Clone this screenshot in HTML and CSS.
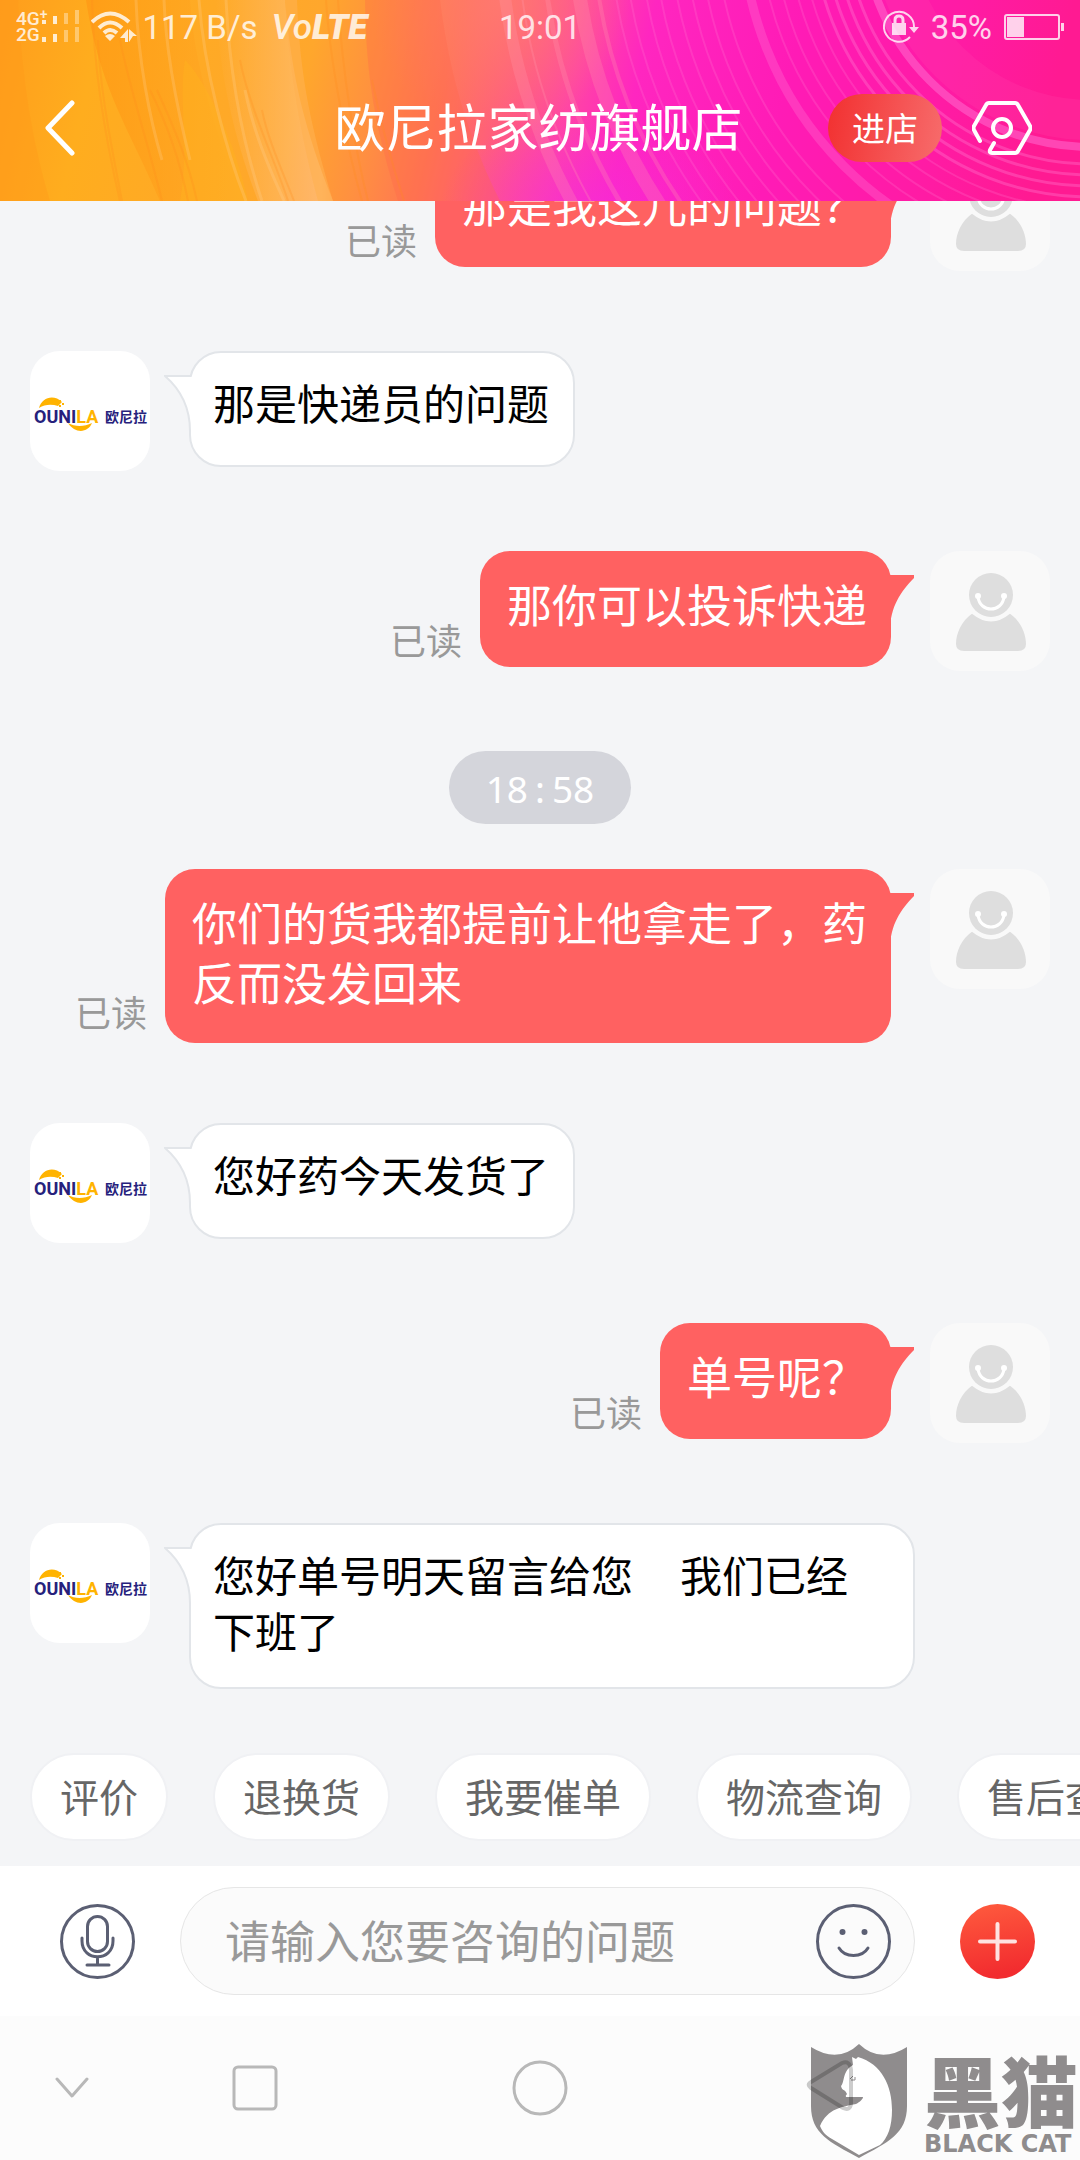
FILE: index.html
```html
<!DOCTYPE html>
<html lang="zh-CN">
<head>
<meta charset="utf-8">
<meta name="viewport" content="width=device-width, initial-scale=1">
<title>欧尼拉家纺旗舰店</title>
<link rel="stylesheet" href="styles.css">
</head>
<body>
<svg class="sprite" aria-hidden="true">
  <symbol id="user" viewBox="0 0 120 120">
    <circle cx="61" cy="44" r="22" fill="#dedede"/>
    <path d="M43 62Q61 78 79 62C91 70 96 83 96 93Q96 100 88 100H34Q26 100 26 93C26 83 31 70 43 62Z" fill="#dedede"/>
    <path d="M43 61Q61 76 79 61" fill="none" stroke="#f9f9f9" stroke-width="4"/>
    <path d="M48 46C50 62 72 62 74 46" fill="none" stroke="#fff" stroke-width="3"/>
    <circle cx="48" cy="45" r="3" fill="#fff"/><circle cx="74" cy="45" r="3" fill="#fff"/>
  </symbol>
  <symbol id="swoosh" viewBox="0 0 120 120">
    <path d="M9 57C12 46 24 43 32 51L28 55C22 53 15 53 9 57Z" fill="#ffb300"/>
    <path d="M28 49h3v3h-3zM32 52h2v2h-2zM29 54h2v2h-2z" fill="#ffb300"/>
    <path d="M38 72C45 76 54 76 62 72C58 82 45 83 38 72Z" fill="#ffb300"/>
  </symbol>
  <symbol id="tail-in" viewBox="0 0 32 56">
    <path d="M32 2H2C16 14 26 32 26 56H32Z" fill="#fff"/>
    <path d="M27 1H1C16 14 26 32 26 56" fill="none" stroke="#e2e5e9" stroke-width="2"/>
  </symbol>
  <symbol id="tail-out" viewBox="0 0 32 56">
    <path d="M0 0H31V3C18 16 7 32 7 56H0Z" fill="#ff6161"/>
  </symbol>
</svg>

<div class="app">
  <header class="header">
    <svg class="header-art" viewBox="0 0 1080 201" preserveAspectRatio="none" aria-hidden="true">
      <defs>
        <linearGradient id="base" gradientUnits="userSpaceOnUse" x1="0" y1="0" x2="1020" y2="240">
          <stop offset="0" stop-color="#ff9d1c"/><stop offset=".1" stop-color="#ffad1e"/>
          <stop offset=".3" stop-color="#ffa72c"/><stop offset=".37" stop-color="#ff9040"/>
          <stop offset=".43" stop-color="#ff7654"/><stop offset=".49" stop-color="#ff5d7e"/>
          <stop offset=".55" stop-color="#ff46a4"/><stop offset=".61" stop-color="#ff26c0"/>
          <stop offset=".75" stop-color="#ff1bb6"/><stop offset=".9" stop-color="#ff1ba4"/>
          <stop offset="1" stop-color="#ff1a92"/>
        </linearGradient>
        <linearGradient id="light" x1="0" x2="1" y1="0" y2="0">
          <stop offset="0" stop-color="#ffc080" stop-opacity="0"/><stop offset=".9" stop-color="#ffc480" stop-opacity=".7"/>
          <stop offset="1" stop-color="#ffc080" stop-opacity=".45"/>
        </linearGradient>
        <linearGradient id="deep" x1="0" x2="1" y1="0" y2="0">
          <stop offset="0" stop-color="#ff9614" stop-opacity=".65"/><stop offset="1" stop-color="#ff9614" stop-opacity="0"/>
        </linearGradient>
        <radialGradient id="violet"><stop offset="0" stop-color="#f52bdc" stop-opacity=".7"/><stop offset="1" stop-color="#f52bdc" stop-opacity="0"/></radialGradient>
        <radialGradient id="coral"><stop offset="0" stop-color="#ff7c70" stop-opacity=".8"/><stop offset="1" stop-color="#ff7c70" stop-opacity="0"/></radialGradient>
      </defs>
      <rect width="1080" height="201" fill="url(#base)"/>
      <ellipse cx="590" cy="210" rx="150" ry="100" fill="url(#violet)"/>
      <ellipse cx="500" cy="0" rx="130" ry="130" fill="url(#coral)"/>
      <path d="M0 0H18C22 80 32 140 50 201H0Z" fill="#ff981a" opacity=".35"/>
      <path d="M86 0H190C195 80 225 150 240 201H160C130 130 100 90 86 0Z" fill="url(#deep)"/>
      <path d="M185 60C205 80 235 140 248 201H180C190 150 178 100 185 60Z" fill="#ffb41e" opacity=".4"/>
      <path d="M215 0H285C292 80 305 130 333 201H258C235 140 220 80 215 0Z" fill="url(#light)"/>
      <path d="M285 0H297C300 80 312 130 333 201H318C302 140 290 80 285 0Z" fill="#ffb050" opacity=".6"/>
      <path d="M365 0H440C450 80 470 140 500 201H398C376 130 366 80 365 0Z" fill="#ff6848" opacity=".3"/>
      <g fill="none" stroke="#ff8a1c" stroke-opacity=".25" stroke-width="2">
        <path d="M92 0C94 80 108 150 120 201M98 40C100 90 112 150 122 201M120 40C130 90 150 150 162 201M150 90C165 120 180 160 188 201M157 90C175 130 188 160 197 201M240 60C250 110 275 160 288 201M262 110C268 140 282 170 294 201M326 0C330 60 345 140 362 201M338 0C342 70 355 150 368 201M372 80C382 130 394 170 404 201"/>
      </g>
      <g fill="none" stroke="#ffd296" stroke-opacity=".25" stroke-width="3">
        <path d="M136 0C138 60 150 120 162 160M164 0C166 60 180 120 190 160M199 0C204 70 226 150 246 201M226 0C230 80 245 150 262 201M245 90C255 140 275 180 284 201"/>
      </g>
      <g fill="none" stroke="#ff9ab0" stroke-opacity=".25">
        <circle cx="1090" cy="-80" r="590" stroke-width="12"/><circle cx="1090" cy="-80" r="573" stroke-width="2"/>
        <circle cx="1090" cy="-80" r="548" stroke-width="5"/><circle cx="1090" cy="-80" r="516" stroke-width="14"/>
        <circle cx="1090" cy="-80" r="497" stroke-width="4"/>
      </g>
      <g fill="none" stroke="#ff7ad0" stroke-opacity=".24" stroke-width="2">
        <circle cx="1090" cy="-80" r="480"/><circle cx="1090" cy="-80" r="466"/><circle cx="1090" cy="-80" r="450"/>
        <circle cx="1090" cy="-80" r="436"/><circle cx="1090" cy="-80" r="420"/><circle cx="1090" cy="-80" r="405"/>
        <circle cx="1090" cy="-80" r="390"/><circle cx="1090" cy="-80" r="374"/><circle cx="1090" cy="-80" r="330"/>
        <circle cx="1090" cy="-80" r="316"/><circle cx="1090" cy="-80" r="302"/><circle cx="1090" cy="-80" r="289"/>
      </g>
      <g fill="none" stroke="#ff7ad0" stroke-opacity=".36" stroke-width="3">
        <circle cx="1090" cy="-80" r="277"/><circle cx="1090" cy="-80" r="266"/><circle cx="1090" cy="-80" r="255"/>
        <circle cx="1090" cy="-80" r="244"/>
      </g>
      <g fill="none" stroke="#ff64cc">
        <circle cx="1090" cy="-80" r="348" stroke-width="9" stroke-opacity=".4"/><circle cx="1090" cy="-80" r="227" stroke-width="8" stroke-opacity=".6"/>
      </g>
      <circle cx="1090" cy="-80" r="200" fill="none" stroke="#ff50b0" stroke-opacity=".18" stroke-width="40"/>
    </svg>

    <div class="status">
      <div class="status-side">
        <div class="cell" aria-label="信号">
          <span class="sim">4G<sup>+</sup></span>
          <span class="sim">2G</span>
        </div>
        <svg class="bars" width="38" height="34" viewBox="0 0 38 34" fill="#fff" aria-hidden="true">
          <path d="M0 10h4v4H0zM11 6h4v8h-4zM0 27h4v5H0zM11 24h4v8h-4z"/>
          <path d="M22 3h4v11h-4zM33 0h4v14h-4zM22 20h4v12h-4zM33 17h4v15h-4z" opacity=".45"/>
        </svg>
        <svg class="wifi" width="46" height="32" viewBox="0 0 46 32" aria-hidden="true">
          <g fill="none" stroke="#fff" stroke-width="4"><path d="M1 11Q19-6 38 11M8 17Q19 6 31 17"/><path d="M13 22Q19 16 26 22" /></g>
          <path d="M14 25Q19 21 24 25L19 30ZM37 18V31H34V27H29ZM38 18L46 25H42L38 31Z" fill="#fff"/>
        </svg>
        <span>117 B/s</span>
        <span class="volte">Vo<b>LTE</b></span>
      </div>
      <time>19:01</time>
      <div class="status-side status-right">
        <svg width="36" height="34" viewBox="0 0 36 34" aria-hidden="true">
          <path d="M27 27A15 15 0 1 1 31 17" fill="none" stroke="#fff" stroke-width="2"/>
          <path d="M26 17H36L31 23ZM9 13H23V25H9Z" fill="#fff"/>
          <path d="M12 14V10Q12 6 16 6Q20 6 20 10V14" fill="none" stroke="#fff" stroke-width="3"/>
        </svg>
        <span>35%</span>
        <svg width="60" height="28" viewBox="0 0 60 28" aria-hidden="true">
          <rect x="1" y="2" width="54" height="24" rx="2" fill="none" stroke="#fff" stroke-width="2"/>
          <path d="M3 4H20V24H3ZM57 10H60V18H57Z" fill="#fff"/>
        </svg>
      </div>
    </div>

    <div class="titlebar">
      <button class="plain back" aria-label="返回">
        <svg width="30" height="56" viewBox="0 0 30 56"><path d="M27 3L3 28L27 53" fill="none" stroke="#fff" stroke-width="5" stroke-linecap="round" stroke-linejoin="round"/></svg>
      </button>
      <h1 class="title">欧尼拉家纺旗舰店</h1>
      <div class="title-actions">
        <button class="enter">进店</button>
        <button class="plain" aria-label="设置">
          <svg width="60" height="56" viewBox="0 0 60 56" fill="none" stroke="#fff" stroke-width="4" stroke-linecap="round" stroke-linejoin="round">
            <path d="M8 41L2 30Q1 28 2 26L14 5Q15 3 17 3H43Q45 3 46 5L58 26Q59 28 58 30L46 51Q45 53 43 53H20Q17 53 18 50L22 43"/>
            <circle cx="30" cy="28" r="9"/>
          </svg>
        </button>
      </div>
    </div>
  </header>

  <main class="chat">
    <article class="row out">
      <span class="read">已读</span>
      <p class="bubble">那是我这儿的问题？<svg class="tail"><use href="#tail-out"/></svg></p>
      <svg class="avatar"><use href="#user"/></svg>
    </article>
    <article class="row in">
      <svg class="avatar" viewBox="0 0 120 120"><use href="#swoosh"/><text x="4" y="72" class="logo-latin">OUNI<tspan class="logo-gold">LA</tspan></text><text x="75" y="71" class="logo-cjk">欧尼拉</text></svg>
      <p class="bubble">那是快递员的问题<svg class="tail"><use href="#tail-in"/></svg></p>
    </article>
    <article class="row out">
      <span class="read">已读</span>
      <p class="bubble">那你可以投诉快递<svg class="tail"><use href="#tail-out"/></svg></p>
      <svg class="avatar"><use href="#user"/></svg>
    </article>
    <time class="stamp">18<span class="colon">:</span>58</time>
    <article class="row out">
      <span class="read">已读</span>
      <p class="bubble">你们的货我都提前让他拿走了，药反而没发回来<svg class="tail"><use href="#tail-out"/></svg></p>
      <svg class="avatar"><use href="#user"/></svg>
    </article>
    <article class="row in">
      <svg class="avatar" viewBox="0 0 120 120"><use href="#swoosh"/><text x="4" y="72" class="logo-latin">OUNI<tspan class="logo-gold">LA</tspan></text><text x="75" y="71" class="logo-cjk">欧尼拉</text></svg>
      <p class="bubble">您好药今天发货了<svg class="tail"><use href="#tail-in"/></svg></p>
    </article>
    <article class="row out">
      <span class="read">已读</span>
      <p class="bubble">单号呢？<svg class="tail"><use href="#tail-out"/></svg></p>
      <svg class="avatar"><use href="#user"/></svg>
    </article>
    <article class="row in">
      <svg class="avatar" viewBox="0 0 120 120"><use href="#swoosh"/><text x="4" y="72" class="logo-latin">OUNI<tspan class="logo-gold">LA</tspan></text><text x="75" y="71" class="logo-cjk">欧尼拉</text></svg>
      <p class="bubble">您好单号明天留言给您     我们已经下班了<svg class="tail"><use href="#tail-in"/></svg></p>
    </article>
  </main>

  <div class="chips">
    <button class="chip">评价</button>
    <button class="chip">退换货</button>
    <button class="chip">我要催单</button>
    <button class="chip">物流查询</button>
    <button class="chip">售后查询</button>
  </div>

  <form class="composer">
    <button type="button" class="plain" aria-label="语音">
      <svg width="75" height="75" viewBox="0 0 75 75" fill="none" stroke="#5b5f73" stroke-width="3" stroke-linecap="round">
        <circle cx="37.5" cy="37.5" r="36"/>
        <rect x="27.500" y="12.500" width="20" height="35" rx="10"/>
        <path d="M22 34V37C22 58 53 58 53 37V34M37.500 53V61M27 61H49"/>
      </svg>
    </button>
    <div class="field">
      <input class="text" type="text" aria-label="消息" placeholder="请输入您要咨询的问题">
      <button type="button" class="plain" aria-label="表情">
        <svg width="75" height="75" viewBox="0 0 75 75" fill="none" stroke="#5b5f73" stroke-width="3" stroke-linecap="round">
          <circle cx="37.5" cy="37.5" r="36"/>
          <path d="M23 44C29 54 46 54 52 44"/>
          <circle cx="26.500" cy="28" r="3" fill="#5b5f73" stroke="none"/><circle cx="48.500" cy="28" r="3" fill="#5b5f73" stroke="none"/>
        </svg>
      </button>
    </div>
    <button type="button" class="plain" aria-label="更多">
      <svg width="75" height="75" viewBox="0 0 75 75">
        <defs><linearGradient id="plus" x1="0" y1="0" x2=".2" y2="1"><stop offset="0" stop-color="#ff5c3e"/><stop offset="1" stop-color="#f22c2f"/></linearGradient></defs>
        <circle cx="37.5" cy="37.5" r="37.500" fill="url(#plus)"/>
        <path d="M37.500 20V55M20 37.500H55" stroke="#fff" stroke-opacity=".85" stroke-width="4" stroke-linecap="round"/>
      </svg>
    </button>
  </form>

  <nav class="sysnav">
    <button class="plain" aria-label="收起"><svg width="34" height="22" viewBox="0 0 34 22"><path d="M2 2L17 19L32 2"/></svg></button>
    <button class="plain" aria-label="最近任务"><svg width="46" height="46" viewBox="0 0 46 46"><rect x="2" y="2" width="42" height="42" rx="4"/></svg></button>
    <button class="plain" aria-label="主页"><svg width="56" height="56" viewBox="0 0 56 56"><circle cx="28" cy="28" r="26"/></svg></button>
    <button class="plain" aria-label="系统返回"><svg width="56" height="56" viewBox="0 0 56 56"></svg></button>
    <div class="watermark">
      <svg class="shield" width="104" height="116" viewBox="0 0 104 116">
        <path d="M5 3Q32 20 53 0Q74 20 101 3V62C101 90 82 98 53 114C24 98 5 90 5 62Z" fill="#8f8c8d"/>
        <path d="M47 21L46 13L50 15L52 13C76 20 86 42 86 66C86 82 82 94 74 101L53 111L26 95C19 91 16 87 14 82C22 64 36 63 50 60C54 58 57 55 57 53H40Q39 52 41 50C39 45 36 47 35 42C39 38 36 27 47 21Z" fill="#fff"/>
        <path d="M44 35L47 32M45 36H49V33" fill="none" stroke="#8f8c8d" stroke-width="1"/>
        <path d="M3 40Q2 42 5 44L37 64Q44 67 45 60V26Q44 16 36 19L5 38Q3 39 3 40Z" fill="none" stroke="#000" stroke-opacity=".2" stroke-width="4"/>
      </svg>
      <div class="cell">
        <span class="mark-cjk">黑猫</span>
        <span class="mark-latin">BLACK CAT</span>
      </div>
    </div>
  </nav>
</div>
</body>
</html>
```
FILE: styles.css
```css
* { box-sizing: border-box; }

body {
  margin: 0;
  background: #f4f5f7;
  font-family: "Noto Sans CJK SC", sans-serif;
}

button, input {
  margin: 0;
  padding: 0;
  border: 0;
  background: none;
  font: inherit;
  color: inherit;
}

svg { display: block; flex: none; }

.sprite { position: absolute; width: 0; height: 0; }
.plain { display: flex; align-items: center; justify-content: center; }
.cell { display: flex; flex-direction: column; }

.app {
  display: flex;
  flex-direction: column;
  height: 100vh;
  overflow: hidden;
}

/* Header */
.header {
  position: relative;
  z-index: 1;
  flex: none;
  overflow: hidden;
  color: #fff;
}

.header-art {
  position: absolute;
  inset: 0;
  width: 100%;
  height: 100%;
  z-index: -1;
}

.status {
  display: grid;
  grid-template-columns: 1fr auto 1fr;
  align-items: center;
  height: 54px;
  padding: 0 16px;
  font-family: Roboto, sans-serif;
  font-size: 33px;
  opacity: .8;
}

.status-side { display: flex; align-items: center; }
.status-right { justify-content: flex-end; gap: 12px; }

.sim {
  height: 16px;
  font-size: 19px;
  line-height: 16px;
  font-weight: 500;
}

.sim sup { font-size: 14px; line-height: 0; vertical-align: 6px; }
.bars { margin-left: -6px; }
.wifi { margin: 0 6px 0 11px; }
.volte { margin-left: 14px; font-style: italic; font-size: 35px; font-weight: 500; }
.volte b { font-weight: 900; }

.titlebar {
  display: grid;
  grid-template-columns: 1fr auto 1fr;
  align-items: center;
  height: 147px;
  padding: 0 48px 0 45px;
}

.back { justify-self: start; }
.title { margin: 0; padding-bottom: 6px; font-size: 51px; font-weight: 400; line-height: 72px; }
.title-actions { display: flex; align-items: center; justify-content: flex-end; gap: 30px; }

.enter {
  width: 114px;
  height: 68px;
  padding-bottom: 2px;
  border-radius: 34px;
  background: linear-gradient(100deg, #f23030, #f76c6c);
  font-size: 33px;
  line-height: 64px;
}

/* Conversation */
.chat {
  display: flex;
  flex: 1;
  flex-direction: column;
  justify-content: flex-end;
  min-height: 0;
  padding: 0 30px 64px;
}

.row { display: flex; flex: none; margin-top: 80px; }
.out { justify-content: flex-end; }

.avatar {
  width: 120px;
  height: 120px;
  border-radius: 30px;
  background: #f9f9f9;
}

.in .avatar { background: #fff; }

.bubble {
  position: relative;
  min-height: 116px;
  max-width: 726px;
  margin: 0;
  white-space: pre-wrap;
  align-self: flex-start;
}

.out .bubble {
  margin-right: 39px;
  padding: 23px 24px 31px 27px;
  border-radius: 30px;
  background: #ff6161;
  color: #fff;
  font-size: 45px;
  line-height: 60px;
}

.in .bubble {
  margin-left: 39px;
  padding: 21px 24px 29px 22px;
  border: 2px solid #e2e5e9;
  border-radius: 32px;
  background: #fff;
  color: #000;
  font-size: 42px;
  line-height: 56px;
}

.tail { position: absolute; width: 32px; height: 56px; top: 24px; }
.out .tail { right: -24px; }
.in .tail { top: 22px; left: -27px; }

.read {
  align-self: flex-end;
  margin-right: 18px;
  padding-bottom: 2px;
  color: #999;
  font-size: 36px;
  line-height: 60px;
}

.stamp {
  flex: none;
  align-self: center;
  width: 182px;
  height: 73px;
  margin-top: 80px;
  border-radius: 37px;
  background: #d4d5db;
  color: #fff;
  font-family: "Noto Sans", sans-serif;
  font-size: 37px;
  line-height: 75px;
  text-align: center;
}

.colon { margin: 0 7px; }
.stamp + .row { margin-top: 45px; }

.logo-latin { font: 700 18px Roboto, sans-serif; fill: #26217c; }
.logo-gold { fill: #ffb300; }
.logo-cjk { font: 700 14px "Noto Sans CJK SC", sans-serif; fill: #26217c; }

/* Quick replies */
.chips {
  display: flex;
  flex: none;
  gap: 45px;
  padding: 0 30px 25px;
  overflow: hidden;
}

.chip {
  flex: none;
  height: 88px;
  padding: 0 28px 4px;
  border: 2px solid #f0f1f4;
  border-radius: 44px;
  background: #fff;
  color: #666;
  font-size: 39px;
}

/* Composer */
.composer {
  display: flex;
  flex: none;
  align-items: center;
  gap: 45px;
  height: 150px;
  padding: 0 45px 0 60px;
  background: #fff;
}

.field {
  display: flex;
  flex: 1;
  align-items: center;
  min-width: 0;
  height: 108px;
  padding: 0 23px 0 44px;
  border: 1px solid #e6e6e6;
  border-radius: 54px;
  background: #fbfbfb;
}

.text { flex: 1; min-width: 0; height: 100%; padding-bottom: 4px; font-size: 45px; outline: 0; }
.text::placeholder { color: #999; opacity: 1; }

/* System navigation */
.sysnav {
  position: relative;
  display: grid;
  flex: none;
  grid-template-columns: 144fr 222fr 348fr 222fr 144fr;
  height: 144px;
  background: #fcfcfc;
}

.sysnav .plain svg {
  fill: none;
  stroke: #b8b8b8;
  stroke-width: 3;
  stroke-linecap: round;
  stroke-linejoin: round;
}

.watermark {
  position: absolute;
  right: 2px;
  bottom: 0;
  display: flex;
  align-items: flex-end;
  gap: 14px;
  color: #8f8c8d;
}

.mark-cjk { font-size: 77px; font-weight: 900; line-height: 78px; }
.mark-latin { font: 700 24px/32px "DejaVu Sans", sans-serif; white-space: nowrap; }
```
